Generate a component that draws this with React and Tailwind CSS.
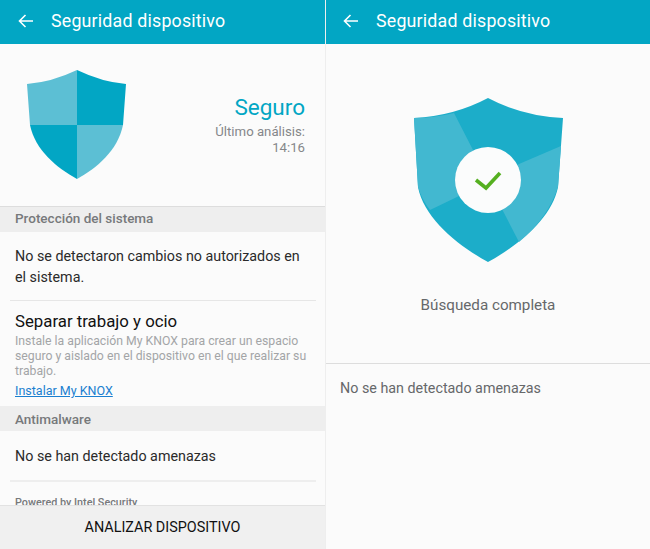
function BackArrow() {
  return (
    <svg width="16" height="14" viewBox="0 0 16 14" fill="none" stroke="#fff" strokeWidth="1.6">
      <path d="M15 7H1.5M7.5 1L1.5 7l6 6" />
    </svg>
  );
}

function Header({ className }) {
  return (
    <div className={`h-[44px] shrink-0 bg-[#02a6c4] flex items-center pb-[2px] gap-[17px] text-white text-[17.8px] tracking-[0.2px] ${className}`}>
      <BackArrow />
      <span>Seguridad dispositivo</span>
    </div>
  );
}

function QuarterShield() {
  return (
    <svg width="100" height="110" viewBox="0 0 100 110">
      <path d="M50 0Q25 12 0 14L3 55H50Z" fill="#5cbfd4" />
      <path d="M50 0Q75 12 99 14L96 55H50Z" fill="#02a6c4" />
      <path d="M3 55C8 80 30 98 50 109V55Z" fill="#02a6c4" />
      <path d="M96 55C91 80 70 98 50 109V55Z" fill="#5cbfd4" />
    </svg>
  );
}

function CheckShield() {
  return (
    <svg className="ml-[2px]" width="150" height="165" viewBox="0 0 150 165">
      <path
        d="M74 0Q40 18 0 20L4 89C10 120 43 147 74 164C105 147 138 120 144 89L149 20Q108 18 74 0Z"
        fill="#1cadc9"
      />
      <path d="M40 15Q20 20 0 20L4 89Q8 102 16 112L43 99L74 82L59 52Z" fill="#42b8d0" />
      <path d="M147 48L105 66L74 82L89 113L105 144Q134 120 144 89Z" fill="#42b8d0" />
      <circle cx="74" cy="82" r="33" fill="#fbfcfc" />
      <path d="M62 82L72 90L86 75" fill="none" stroke="#55b020" strokeWidth="3.6" />
    </svg>
  );
}

function SectionTitle({ children, className }) {
  return (
    <div className={`bg-[#eeeeee] text-[#77797b] text-[13.5px] font-medium pl-[15px] flex items-center ${className}`}>
      {children}
    </div>
  );
}

export default function App() {
  return (
    <div className="w-[650px] h-[549px] flex bg-[#fbfbfb] overflow-hidden font-['Roboto',sans-serif]">
      {/* Left phone */}
      <div className="w-[325px] flex flex-col">
        <Header className="pl-[18px]" />
        <div className="flex-1 min-h-0 overflow-hidden">
          <div className="h-[162px] flex items-center justify-between pl-[27px] pr-[20px]">
            <QuarterShield />
            <div className="text-right">
              <div className="text-[#02a6c4] text-[22.5px] leading-[26px] -mt-[1px]">Seguro</div>
              <div className="text-[#85878a] text-[13.2px] leading-[16px] mt-[4px]">
                Último análisis:
                <br />
                14:16
              </div>
            </div>
          </div>
          <SectionTitle className="h-[26px] pb-[2px] border-t border-[#dddddd]">Protección del sistema</SectionTitle>
          <div className="h-[68px] pl-[15px] pr-[20px] pt-[14px] text-[#2a2a2a] text-[14.3px] leading-[21px]">
            No se detectaron cambios no autorizados en el sistema.
          </div>
          <div className="ml-[10px] mr-[9px] border-t border-[#e6e6e6]" />
          <div className="h-[105px] pl-[15px] pr-[10px] pt-[10px]">
            <div className="text-[#111111] text-[16.8px] leading-[20px]">Separar trabajo y ocio</div>
            <div className="text-[#a3a5a7] text-[12.25px] leading-[15px] mt-[3px]">
              Instale la aplicación My KNOX para crear un espacio seguro y aislado en el dispositivo en el que realizar su trabajo.
            </div>
            <div className="text-[#1a7fd0] text-[12.5px] leading-[15px] mt-[4px] underline">Instalar My KNOX</div>
          </div>
          <SectionTitle className="h-[25px] pt-[1px]">Antimalware</SectionTitle>
          <div className="h-[49px] pl-[15px] pt-[2px] flex items-center text-[#2a2a2a] text-[14.3px]">
            No se han detectado amenazas
          </div>
          <div className="ml-[10px] mr-[9px] border-t-2 border-[#eeeeee]" />
          <div className="pl-[15px] pt-[14px] text-[#77797b] text-[10.8px] font-medium leading-[14px]">Powered by Intel Security</div>
        </div>
        <div className="h-[44px] shrink-0 bg-[#f0f0f0] border-t border-[#e2e2e2] flex items-center justify-center text-[#111111] text-[14.4px]">
          ANALIZAR DISPOSITIVO
        </div>
      </div>

      {/* Right phone */}
      <div className="flex-1 flex flex-col border-l border-[#eeeeee]">
        <Header className="pl-[17px]" />
        <div className="h-[320px] flex flex-col items-center border-b border-[#dddddd] pt-[54px]">
          <CheckShield />
          <div className="text-[#66686a] text-[15.2px] mt-[31px]">Búsqueda completa</div>
        </div>
        <div className="pl-[14px] pt-[14px] text-[#66686a] text-[14.3px]">No se han detectado amenazas</div>
      </div>
    </div>
  );
}
